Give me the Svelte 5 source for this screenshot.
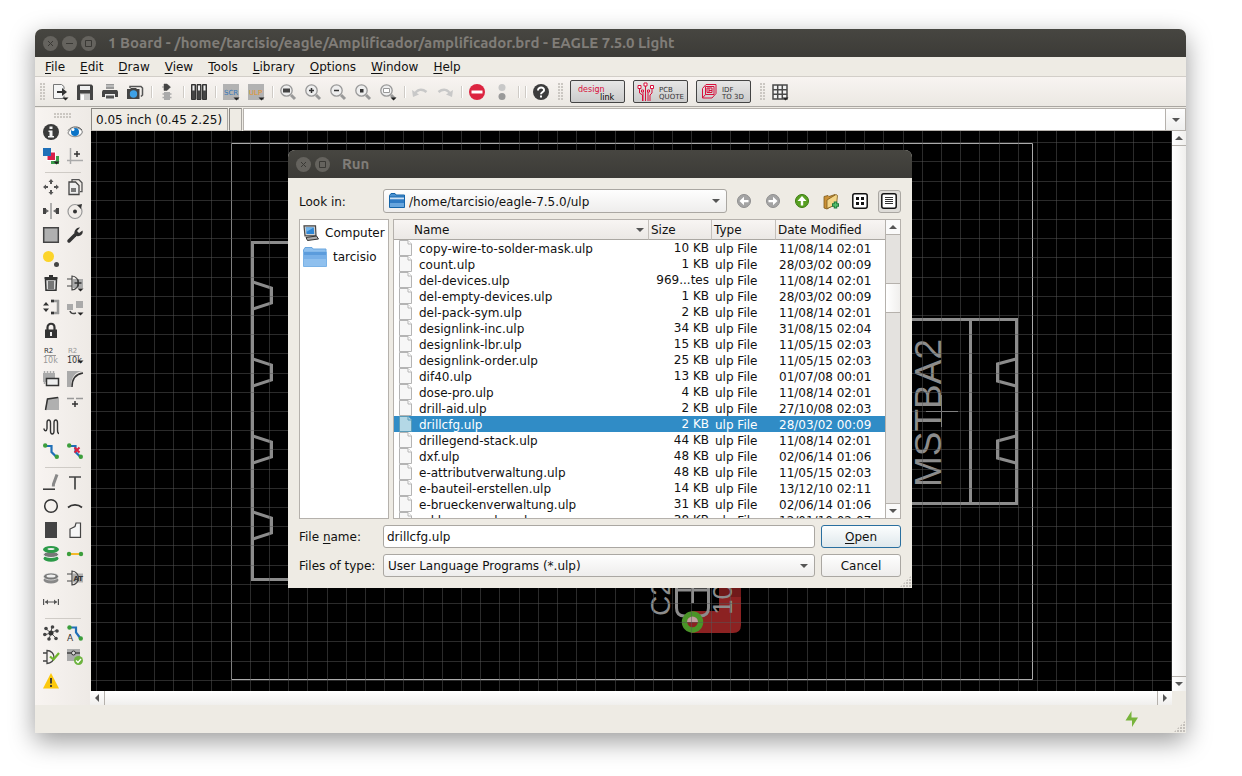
<script>
	const drop = '<path d="M10.5 13.5h6l-3 3z" fill="#222"/>';
	const lens = '<circle cx="6.5" cy="6.5" r="5.7" fill="#eee" stroke="#999" stroke-width="1.3"/><path d="M11 11l4 4" stroke="#999" stroke-width="3"/>';

	const icons = {
		open: '<path d="M12 5V2.500L9.500.500H1.500v14H12v-3" fill="#f5f5f5" stroke="#777" /><path d="M5 7h5V4l5 4-5 4V9H5z" fill="#333"/>' + drop,
		save: '<path d="M0 2l1-1.500h13.500L16 2v14H0z" fill="#444"/><path d="M3 2h10v4H3z" fill="#eee"/><path d="M3 9.500h10V16H3z" fill="#ccc"/><path d="M4 10.500h3V16H4z" fill="#fff"/>',
		print: '<path d="M4 0h8v5H4z" fill="#999"/><path d="M4 2h8" stroke="#ddd"/><path d="M1 6h14l1 1.500V13H0V7.500z" fill="#444"/><path d="M3 10h10v6H3z" fill="#eee"/><path d="M4 11.500h8v3H4z" fill="#555"/>',
		camera: '<path d="M3 4V2.500h11l1.500 1.500v7L14 12.500" fill="none" stroke="#555" stroke-width="1.500"/><path d="M0 5h3l1-1h5l1 1h2.500v10H0z" fill="#444"/><circle cx="6.500" cy="10" r="3.700" fill="#3ea1e6"/>',
		board: '<path d="M5 0h3l3.500 3L8 6.500H5zM3 3h3" fill="#444" stroke="#444" stroke-width=".5"/><path d="M5 8h6v8H5z" fill="#aaa"/><path d="M3.500 10h9M3.500 13.500h9" stroke="#aaa" stroke-width="1.500"/>',
		library: '<path d="M.5.500h4v15h-4zM6 .500h4v15H6zM11.500.500h4v15h-4z" fill="#444" stroke="#333"/><path d="M1.500 1.500h2v5h-2zM7 1.500h2v5H7zM12.500 1.500h2v5h-2z" fill="#eee"/>',
		scr: '<path d="M0 0h16v16H0z" fill="#b2b2b2"/><text x="1" y="10.500" font-family="DejaVu Sans" font-size="7" fill="#3878b8">SCR</text>' + drop,
		ulp: '<path d="M0 0h16v16H0z" fill="#b2b2b2"/><text x="1" y="10.500" font-family="DejaVu Sans" font-size="7" fill="#e39328">ULP</text>' + drop,
		zoomfit: lens + '<path d="M3 4.500h7v4H3z" fill="#444"/>',
		zoomin: lens + '<path d="M6.500 4v5M4 6.500h5" stroke="#333" stroke-width="1.500"/>',
		zoomout: lens + '<path d="M4 6.500h5" stroke="#333" stroke-width="1.500"/>',
		redraw: lens + '<path d="M5 5h3.500v3.500H5z" fill="#333"/>',
		zoomsel: lens + '<path d="M3.500 4.500h6v4h-6z" fill="#fff" stroke="#999"/>' + drop,
		undo: '<path d="M2.500 10.500C5 5 10 4.500 14.500 8" fill="none" stroke="#c8c8c8" stroke-width="2.500"/><path d="M0 6l1 7 6-2.500z" fill="#c8c8c8"/>',
		redo: '<path d="M13.500 10.500C11 5 6 4.500 1.500 8" fill="none" stroke="#c8c8c8" stroke-width="2.500"/><path d="M16 6l-1 7-6-2.500z" fill="#c8c8c8"/>',
		stop: '<circle cx="8" cy="8" r="8" fill="#dc2440"/><path d="M2.500 6.500h11v3h-11z" fill="#fff"/>',
		go: '<circle cx="8" cy="3.500" r="3.500" fill="#c8c8c8"/><circle cx="8" cy="12.500" r="3.500" fill="#999"/>',
		help: '<circle cx="8" cy="8" r="8" fill="#3c3c3c"/><path d="M5 6.500C5 2.500 11.500 2.800 11 6.300c-.2 1.700-3 1.800-3 4M8 11.500v2" fill="none" stroke="#fff" stroke-width="2"/>',
		grid: '<path d="M1 1h14v14H1zM1 5.700h14M1 10.300h14M5.700 1v14M10.300 1v14" fill="#f4f4f4" stroke="#4a4a4a" stroke-width="1.500"/>' + drop,
		info: '<circle cx="8" cy="8" r="8" fill="#3a3a3a"/><path d="M6.500 2.500h3V5h-3zM5.500 6.500h4V12H11v1.500H5V12h1.500V8h-1z" fill="#f4f4f4"/>',
		show: '<path d="M1 9C3 3 13 2 15.500 8 13 14 4 14 1 9z" fill="#fff" stroke="#999" stroke-width="1.200"/><circle cx="8" cy="8" r="4" fill="#0b74c8"/><circle cx="6" cy="5.500" r="1.500" fill="#fff"/><path d="M1 6.500C5 1.500 12 2 15 6" fill="none" stroke="#666"/>',
		layers: '<path d="M8 8h8v8H8z" fill="#3b9d4b"/><path d="M4 4h8.500v8.500H4z" fill="#d8204a" stroke="#fff"/><path d="M0 0h8v8H0z" fill="#2070b8"/>' + drop,
		mark: '<path d="M3.500 0v16M0 12.500h16" stroke="#aaa" stroke-width="1.500"/><path d="M10 3v6M7 6h6" stroke="#333" stroke-width="1.500"/>',
		move: '<path d="M8 0l2.500 3h-1.500v2H7V3H5.500zM8 16l2.500-3H9v-2H7v2H5.500zM0 8l3-2.500V7h2v2H3v1.500zM16 8l-3-2.500V7h-2v2h2v1.500z" fill="#555"/>',
		copy: '<path d="M5 3V.7h7l3 3v9h-2" fill="none" stroke="#555" stroke-width="1.300"/><path d="M2 3h6.500L12 6.500v9H2z" fill="#eee" stroke="#444" stroke-width="1.300"/><path d="M4 9h5v4H4z" fill="#777"/>',
		mirror: '<path d="M8 0v16" stroke="#999" stroke-width="1.500"/><path d="M0 5h3v6H0zM13 5h3v6h-3z" fill="#444"/><path d="M3 6l3 2-3 2zM13 6l-3 2 3 2z" fill="#666"/>',
		rotate: '<circle cx="8" cy="8.500" r="7" fill="none" stroke="#999" stroke-width="1.200"/><circle cx="8" cy="8.500" r="2" fill="#333"/><path d="M10 2l5-1-1 5z" fill="#333"/>',
		group: '<path d="M.7.700h14.600v14.600H.7z" fill="#b0b0b0" stroke="#444" stroke-width="1.500"/>',
		change: '<path d="M2 14l6-6" stroke="#333" stroke-width="3.500" stroke-linecap="round"/><path d="M13 .5L10 4l2 2 3.500-2.500C17 8 11 11 8 8 6 5 9 0 13 .5z" fill="#333"/>',
		paste: '<circle cx="5.500" cy="5.500" r="5.500" fill="#fcd42a"/><circle cx="13.500" cy="13.500" r="2.500" fill="#444"/>',
		trash: '<path d="M2.500 4.500h11L13 15.300H3z" fill="#ddd" stroke="#333" stroke-width="1.500"/><path d="M6 6v8M8 6v8M10 6v8" stroke="#333" stroke-width="1.200"/><path d="M1.500 3h13M6 1h4" stroke="#333" stroke-width="2"/>',
		add: '<path d="M6 4h10v9H6z" fill="#aaa"/><path d="M0 4h5M0 11h5M5 1v14c4 0 6.500-4 6.500-7S9 1 5 1z" fill="none" stroke="#444" stroke-width="1.200"/><path d="M11 4.500v7M7.500 8h7" stroke="#333" stroke-width="1.300"/>' + drop,
		pinswap: '<path d="M16 2H8M16 14H8M15 1v14" stroke="#999" stroke-width="2.500"/><path d="M8 2h3M8 14h3" stroke="#333" stroke-width="2.500"/><path d="M0 6.500h6L3 3zM0 9.500h6L3 13z" fill="#333"/>',
		replace: '<path d="M0 5h6v6H0zM9 2h7v7H9z" fill="#aaa"/><path d="M3 12c1 3 3 3 6 2" fill="none" stroke="#444" stroke-width="1.500"/>' + drop,
		lock: '<path d="M4.500 7V4.500c0-5 7-5 7 0V7" fill="none" stroke="#333" stroke-width="2.200"/><path d="M2 6.500h12V15H2z" fill="#333"/><path d="M8 9v4" stroke="#eee" stroke-width="2"/>',
		name: '<text x="1" y="6" font-family="DejaVu Sans" font-size="7" fill="#333">R2</text><path d="M2 8.500h11" stroke="#999"/><text x="0" y="16" font-family="DejaVu Sans" font-size="8" fill="#999">10k</text>',
		value: '<text x="1" y="6" font-family="DejaVu Sans" font-size="7" fill="#999">R2</text><path d="M2 8.500h11" stroke="#999"/><text x="0" y="16" font-family="DejaVu Sans" font-size="8" fill="#333">10k</text>' + drop,
		smash: '<path d="M0 2h12v9H0z" fill="#aaa"/><path d="M1.500 0v13M4.500 0v13M7.500 0v13M10.500 0v13" stroke="#aaa" stroke-width="1.500"/><path d="M3.500 7.500h12v7h-12z" fill="#eee" stroke="#333" stroke-width="1.500"/>',
		miter: '<path d="M0 0h16C8 1 4 6 4 16H0z" fill="#aaa"/><path d="M16 2C9 3 5 8 5 16" fill="none" stroke="#333" stroke-width="1.500"/>',
		split: '<path d="M4 4l12-2v13H2z" fill="#b0b0b0"/><path d="M2.500 15L4.500 4 15 2.500" fill="none" stroke="#333" stroke-width="1.500"/>',
		optimize: '<path d="M0 3.500h7M9 3.500h7" stroke="#999" stroke-width="1.500"/><path d="M8 6v6M5 9h6" stroke="#333" stroke-width="1.500"/>',
		meander: '<path d="M.7 9.500c1 3 3 3 3.300 0V4c0-4 3.500-4 3.500 0v8c0 4 3.500 4 3.500 0V4c0-4 3.500-4 3.500 0v6.500c0 3 1 4 1.500 4" fill="none" stroke="#333" stroke-width="1.400"/>',
		route: '<path d="M2 3h6.500v6l5 5" fill="none" stroke="#2070b8" stroke-width="2.200"/><circle cx="2.200" cy="2.500" r="2.200" fill="#3c9e3c"/><circle cx="13.800" cy="13.800" r="2.200" fill="#3c9e3c"/>',
		ripup: '<path d="M2 3h6.500v6l5 5" fill="none" stroke="#2070b8" stroke-width="2.200"/><circle cx="2.200" cy="2.500" r="2.200" fill="#3c9e3c"/><circle cx="13.800" cy="13.800" r="2.200" fill="#3c9e3c"/><path d="M7.500 4.500l5 5M12.500 4.500l-5 5" stroke="#dc2040" stroke-width="2"/>',
		wire: '<path d="M0 15.200h12" stroke="#333" stroke-width="1.500"/><path d="M14 .500L10.500 10l-.2 2.500" fill="none" stroke="#888" stroke-width="3"/>',
		text: '<path d="M2 3h12M8 3v12.500" stroke="#444" stroke-width="1.700"/>',
		circle: '<circle cx="8" cy="8" r="6.300" fill="none" stroke="#333" stroke-width="1.500"/>',
		arc: '<path d="M1 9.500C5 6 11 6 15 9.500" fill="none" stroke="#333" stroke-width="1.700"/>',
		rect: '<path d="M2 0h12v16H2z" fill="#444"/>',
		polygon: '<path d="M3 15.300V7l5-2.500L9 1h4.500v14.300z" fill="#f6f6f6" stroke="#444" stroke-width="1.200"/>',
		via: '<ellipse cx="8" cy="12.500" rx="7.500" ry="3.200" fill="#2c9a48"/><ellipse cx="8" cy="8.500" rx="7.500" ry="3" fill="#777" stroke="#eee"/><ellipse cx="8" cy="3.500" rx="8" ry="3.500" fill="#2c9a48"/><ellipse cx="8" cy="3" rx="3.500" ry="1" fill="#eee"/>',
		signal: '<path d="M2 8h12" stroke="#f4b92a" stroke-width="2"/><circle cx="2" cy="8" r="2.200" fill="#3c9e3c"/><circle cx="14" cy="8" r="2.200" fill="#3c9e3c"/>',
		hole: '<ellipse cx="8" cy="10" rx="7.500" ry="3.500" fill="#888"/><ellipse cx="8" cy="6.500" rx="7.500" ry="3.500" fill="#777" stroke="#eee" stroke-width=".7"/><ellipse cx="8" cy="6" rx="4.500" ry="1.500" fill="#eee"/>',
		attribute: '<path d="M6 3.500h10v9H6z" fill="#b0b0b0"/><path d="M0 4h5M0 11h5M5 1v14c4 0 6.500-4 6.500-7S9 1 5 1z" fill="none" stroke="#444" stroke-width="1.200"/><text x="6.500" y="11" font-family="DejaVu Sans" font-weight="bold" font-size="7" fill="#333">AT</text>',
		dimension: '<path d="M.6 5v6M15.400 5v6M2 8h12" stroke="#555" stroke-width="1.200"/><path d="M5 5.500L2 8l3 2.500zM11 5.500L14 8l-3 2.500z" fill="#555"/>',
		ratsnest: '<path d="M8 8L2 3M8 8l1-7M8 8l6-3M8 8l6 6M8 8l-2 6M8 8l-7 2" stroke="#555"/><circle cx="8" cy="8" r="2.500" fill="#333"/><g fill="#444"><circle cx="3" cy="3.500" r="1.800"/><circle cx="9.500" cy="2" r="1.800"/><circle cx="14" cy="6" r="1.800"/><circle cx="13" cy="13.500" r="1.800"/><circle cx="6" cy="14" r="1.800"/><circle cx="1.800" cy="9.500" r="1.800"/></g>',
		auto: '<path d="M3 2.500h6v5l4.500 6" fill="none" stroke="#2070b8" stroke-width="2.200"/><circle cx="2.500" cy="2.500" r="2.200" fill="#3c9e3c"/><circle cx="13.800" cy="13.500" r="2.200" fill="#3c9e3c"/><text x="0" y="16" font-family="DejaVu Sans" font-size="9" fill="#333">A</text>',
		erc: '<path d="M0 4h4M0 12h4M4 1.500v13c4 0 7-3 7-6.500s-3-6.500-7-6.500z" fill="none" stroke="#444" stroke-width="1.300"/><path d="M7 7.500l3.500 3L16 4" fill="none" stroke="#6fb52c" stroke-width="2.200"/>',
		drc: '<path d="M0 0h13v12H0z" fill="#aaa"/><path d="M0 4h13" stroke="#333" stroke-width="1.300"/><circle cx="6.500" cy="4" r="2" fill="#ddd" stroke="#333"/><circle cx="11.500" cy="11.500" r="4.500" fill="#6db33f"/><path d="M9 11.500l2 2 3-3.500" fill="none" stroke="#fff" stroke-width="1.300"/>',
		errors: '<path d="M8 0l8 15.500H0z" fill="#fcc80c"/><path d="M8 5v5.500M8 12v2" stroke="#333" stroke-width="1.800"/>',
		back: '<circle cx="8" cy="8" r="6.500" fill="#a4a4a4" stroke="#8f8f8f"/><path d="M3.500 8l4.500-4.200V7h4.500v2.200H8v3z" fill="#fff"/>',
		forward: '<circle cx="8" cy="8" r="6.500" fill="#a4a4a4" stroke="#8f8f8f"/><path d="M12.500 8L8 3.800V7H3.500v2.200H8v3z" fill="#fff"/>',
		up: '<circle cx="8" cy="8" r="6.500" fill="#58a022" stroke="#3a7c10"/><path d="M8 3l4.500 5H9.200v4.500H6.800V8H3.500z" fill="#fff"/>',
		newfolder: '<path d="M1 3.500l4-1 1 1 6-2v9.500l-8 5-3-1z" fill="#c98f35" stroke="#7c5a1c" stroke-width=".8"/><path d="M4 7l9-5.500 1.500 1-1 9-9.500 4z" fill="#f3d587" stroke="#7c5a1c" stroke-width=".8"/><path d="M12.500 8.500v7M9 12h7" stroke="#1e7a3c" stroke-width="3.500"/><path d="M12.500 9.500v5M10 12h5" stroke="#56c06c" stroke-width="1.500"/>',
		list: '<rect x=".8" y=".8" width="14.400" height="14.400" rx="2" fill="#fff" stroke="#111" stroke-width="1.500"/><path d="M4 4h3v3H4zM9 4h3v3H9zM4 9h3v3H4zM9 9h3v3H9z" fill="#111"/>',
		detail: '<rect x=".8" y=".8" width="14.400" height="14.400" rx="2" fill="#fff" stroke="#111" stroke-width="1.500"/><path d="M4 4.500h8M4 6.500h8M4 8.500h8M4 10.500h8" stroke="#333"/>',
		folder: '<path d="M.5 2.500L2 .500h4l1 1.500h8.500v3H.5z" fill="#4a90d0" stroke="#1464a8"/><path d="M.5 4h15v10.500H.5z" fill="#3c86cc" stroke="#1464a8"/><path d="M1 4.500h14v2H1z" fill="#cfe2f4"/><path d="M1 6.500h14V10H1z" fill="#2f7bc4"/><path d="M1 10h14v4H1z" fill="#68a6de"/>',
		computer: '<path d="M1 .800h11.500l.5 10H2z" fill="#d0d0d0" stroke="#444" stroke-width="1.200"/><path d="M2.800 2.500h8l.4 6.500H3.500z" fill="#2f86d4"/><path d="M2.800 2.500h8L3.300 7z" fill="#73b6ec"/><path d="M3 12.500l10.500-1.500 2 3-11 1.500z" fill="#aaa" stroke="#333"/>'
	};

	const menus = ['File', 'Edit', 'Draw', 'View', 'Tools', 'Library', 'Options', 'Window', 'Help'];

	const tools = [
		'open', 'save', 'print', 'camera', '|', 'board', '|', 'library', '|', 'scr', 'ulp', '|',
		'zoomfit', 'zoomin', 'zoomout', 'redraw', 'zoomsel', '|', 'undo', 'redo', '|', 'stop', 'go', '|', '|', 'help'
	];

	const palette = [
		'info', 'show', 'layers', 'mark', '|',
		'move', 'copy', 'mirror', 'rotate', 'group', 'change', 'paste', '', 'trash', 'add',
		'pinswap', 'replace', 'lock', '', 'name', 'value', 'smash', 'miter', 'split', 'optimize',
		'meander', '', 'route', 'ripup', '|',
		'wire', 'text', 'circle', 'arc', 'rect', 'polygon', 'via', 'signal', 'hole', 'attribute', 'dimension', '', '|',
		'ratsnest', 'auto', 'erc', 'drc', 'errors', ''
	];

	const files = [
		['copy-wire-to-solder-mask.ulp', '10 KB', '11/08/14 02:01'],
		['count.ulp', '1 KB', '28/03/02 00:09'],
		['del-devices.ulp', '969...tes', '11/08/14 02:01'],
		['del-empty-devices.ulp', '1 KB', '28/03/02 00:09'],
		['del-pack-sym.ulp', '2 KB', '11/08/14 02:01'],
		['designlink-inc.ulp', '34 KB', '31/08/15 02:04'],
		['designlink-lbr.ulp', '15 KB', '11/05/15 02:03'],
		['designlink-order.ulp', '25 KB', '11/05/15 02:03'],
		['dif40.ulp', '13 KB', '01/07/08 00:01'],
		['dose-pro.ulp', '4 KB', '11/08/14 02:01'],
		['drill-aid.ulp', '2 KB', '27/10/08 02:03'],
		['drillcfg.ulp', '2 KB', '28/03/02 00:09'],
		['drillegend-stack.ulp', '44 KB', '11/08/14 02:01'],
		['dxf.ulp', '48 KB', '02/06/14 01:06'],
		['e-attributverwaltung.ulp', '48 KB', '11/05/15 02:03'],
		['e-bauteil-erstellen.ulp', '14 KB', '13/12/10 02:11'],
		['e-brueckenverwaltung.ulp', '31 KB', '02/06/14 01:06'],
		['e-klemmenplan.ulp', '38 KB', '12/01/10 02:07']
	];

	let selected = $state('drillcfg.ulp');
	let command = $state('');

	// board grid, 19.2px pitch snapped to whole pixels
	const gridX = Array.from({ length: 130 }, (_, i) => Math.round(5.2 + i * 19.2));
	const gridY = Array.from({ length: 70 }, (_, i) => Math.round(11.2 + i * 19.2));
</script>

{#snippet icon(name)}
	<svg class="icon" viewBox="0 0 16 16" aria-hidden="true">{@html icons[name]}</svg>
{/snippet}

{#snippet arrow(dir)}
	<svg class="arrow {dir}" viewBox="0 0 8 8" aria-hidden="true"><path d="M0 2h8L4 6z" fill="#555" /></svg>
{/snippet}

{#snippet winButton(kind)}
	<button class="win-btn" aria-label={kind}>
		<svg viewBox="0 0 15 15">
			{#if kind === 'close'}
				<path d="M5 5l5 5M10 5l-5 5" />
			{:else if kind === 'minimize'}
				<path d="M4 7.500h7" />
			{:else}
				<path d="M4.500 4.500h6v6h-6z" />
			{/if}
		</svg>
	</button>
{/snippet}

<main>
	<div class="window">
		<header class="titlebar">
			{@render winButton('close')}
			{@render winButton('minimize')}
			{@render winButton('maximize')}
			<h1>1 Board - /home/tarcisio/eagle/Amplificador/amplificador.brd - EAGLE 7.5.0 Light</h1>
		</header>

		<nav class="menubar">
			{#each menus as m}
				<button><u>{m[0]}</u>{m.slice(1)}</button>
			{/each}
		</nav>

		<div class="toolbar">
			<span class="grip"></span>
			{#each tools as t}
				{#if t === '|'}
					<span class="sep"></span>
				{:else}
					<button class="tool" aria-label={t}>{@render icon(t)}</button>
				{/if}
			{/each}
			<span class="grip mid"></span>
			<div class="banners">
				<button class="banner design"><span>design</span><b>link</b></button>
				<button class="banner">
					<svg viewBox="0 0 18 19">
						<path d="M2.500 6v5l3 2v6M6 10.500V19M8.500 4v15M11 10V19M15 6v5l-2 2v6" />
						<path d="M1 3.500h3v3H1zM7 1h3v3H7zM13.500 3.500h3v3h-3zM4.500 8h2v2h-2zM10.500 8h2v2h-2z" fill="#fff" />
					</svg>
					<span>PCB<br />QUOTE</span>
				</button>
				<button class="banner">
					<svg viewBox="0 0 18 19">
						<path d="M2.500 6.500L6 2.500h10v9l-4 4.500H2.500zM5.500 4.500h8.500v8M2.500 16l3-3.500v-8M5.500 12.500h8.500" />
						<path d="M7 6h5v4.500H7zM9 6v4.500M9 8.500h3" />
					</svg>
					<span>IDF<br />TO 3D</span>
				</button>
			</div>
			<span class="grip"></span>
			<button class="tool" aria-label="grid">{@render icon('grid')}</button>
		</div>

		<div class="work">
			<aside class="palette">
				<span class="grip wide"></span>
				<div class="palette-grid">
					{#each palette as p}
						{#if p === '|'}
							<span class="rule"></span>
						{:else if p === ''}
							<span></span>
						{:else}
							<button aria-label={p}>{@render icon(p)}</button>
						{/if}
					{/each}
				</div>
			</aside>

			<section class="editor">
				<div class="command">
					<span class="coords">0.05 inch (0.45 2.25)</span>
					<span class="status-cell"></span>
					<input type="text" aria-label="Command" bind:value={command} />
					<button aria-label="Command history">{@render arrow('down')}</button>
				</div>

				<div class="canvas-row">
					<svg class="canvas" role="img" aria-label="Board">
						<g transform="translate(-91 -131)" fill="none" stroke="#8c8c8c" stroke-width="3">
							<path d="M719 580h22v45q0 8-8 8h-42v-22h28z" fill="#8c2222" stroke="none" />
							<path d="M719 580h22v17h-22z" fill="#701a1a" stroke="none" />
							<path d="M676.500 580v28q0 8 8 8h15q9 0 9-8v-28M678 590h30M692.500 588v15" />
							<path d="M231.500 143.500h801v536h-801z" stroke="#aaa" stroke-width="1" />
							<path d="M300 242.500H252.500v337H300" />
							{#each [0, 77, 154, 230] as dy}
								<path d="M253 {282 + dy}l18.500 6v15l-18.500 6" />
							{/each}
							<path d="M900 319.500h116.500v184H900M970.500 319v184" />
							{#each [0, 77] as dy}
								<path d="M1016 {359 + dy}l-18.500 5v17l18.500 5" />
							{/each}
							<g class="silk">
								<text class="big" transform="translate(941 487) rotate(-90)">MSTBA2</text>
								<text transform="translate(670 616) rotate(-90)">C2</text>
								<text transform="translate(732 615) rotate(-90)">10</text>
							</g>
							<circle cx="692.500" cy="622" r="8" stroke="#4a9428" stroke-width="5.500" fill="#8c2222" />
							<path d="M687 622a5.500 5.500 0 0 1 11 0z" fill="#c0a0a0" stroke="none" />
							<path d="M926 411.500h32M941.500 395v32" stroke="#aaa" stroke-width="1" />
						</g>
						<g class="grid-lines">
							{#each gridX as x}<rect {x} y="0" width="1" height="100%" />{/each}
							{#each gridY as y}<rect x="0" {y} width="100%" height="1" />{/each}
						</g>
					</svg>
					<div class="vscroll">
						<button aria-label="Scroll up">{@render arrow('up')}</button>
						<span></span>
						<button aria-label="Scroll down">{@render arrow('down')}</button>
					</div>
				</div>

				<div class="hscroll">
					<button aria-label="Scroll left">{@render arrow('left')}</button>
					<span></span>
					<button aria-label="Scroll right">{@render arrow('right')}</button>
				</div>
			</section>
		</div>

		<footer class="statusbar">
			<svg viewBox="0 0 14 16" aria-hidden="true"><path d="M6.500 0v6.500H13L7 16V9.500H.5z" fill="#78b43c" /></svg>
			<span class="size-grip"></span>
		</footer>

		<div class="dialog" role="dialog" aria-label="Run">
			<header class="titlebar">
				{@render winButton('close')}
				{@render winButton('maximize')}
				<h2>Run</h2>
			</header>

			<form class="dialog-body" onsubmit={(e) => e.preventDefault()}>
				<div class="look-row">
					<label for="look">Look in:</label>
					<div class="combo">
						{@render icon('folder')}
						<select id="look"><option>/home/tarcisio/eagle-7.5.0/ulp</option></select>
						{@render arrow('down')}
					</div>
					<div class="nav-btns">
						{#each ['back', 'forward', 'up', 'newfolder', 'list', 'detail'] as n}
							<button type="button" class:pressed={n === 'detail'} aria-label={n}>{@render icon(n)}</button>
						{/each}
					</div>
				</div>

				<div class="panes">
					<ul class="places">
						<li>{@render icon('computer')}Computer</li>
						<li>
							<svg class="big-folder" viewBox="0 0 24 20" aria-hidden="true">
								<path d="M.5 3L2 .500h7L10 2h13v5H.5z" fill="#8fc0ee" stroke="#6aa6de" />
								<path d="M.5 5h23v14.500H.5z" fill="#8fc0ee" stroke="#7ab2e6" />
								<path d="M1 5h22v3H1z" fill="#5c9cdc" />
								<path d="M1 8h22v4H1z" fill="#78b0e8" />
							</svg>
							tarcisio
						</li>
					</ul>

					<div class="files">
						<div class="file-list">
							<table>
								<thead>
									<tr>
										<th class="c-name"><div>Name {@render arrow('down')}</div></th>
										<th class="c-size">Size</th>
										<th class="c-type">Type</th>
										<th>Date Modified</th>
									</tr>
								</thead>
								<tbody>
									{#each files as [name, size, date]}
										<tr class:selected={name === selected} onclick={() => (selected = name)}>
											<td class="name">
												<div class="file-name">
													<svg viewBox="0 0 14 16" aria-hidden="true">
														<path class="page" d="M.5.500H9L12.500 4v11.500H.5z" />
														<path class="fold" d="M9 .500V4h3.500" />
													</svg>
													<span>{name}</span>
												</div>
											</td>
											<td class="size">{size}</td>
											<td>ulp File</td>
											<td>{date}</td>
										</tr>
									{/each}
								</tbody>
							</table>
						</div>
						<div class="list-scroll">
							<button type="button" aria-label="Scroll up">{@render arrow('up')}</button>
							<span class="track"><span class="thumb"></span></span>
							<button type="button" aria-label="Scroll down">{@render arrow('down')}</button>
						</div>
					</div>
				</div>

				<div class="form-row">
					<label for="fname">File <u>n</u>ame:</label>
					<input id="fname" type="text" bind:value={selected} />
					<button class="push default"><u>O</u>pen</button>
				</div>
				<div class="form-row">
					<label for="ftype">Files of type:</label>
					<div class="combo">
						<select id="ftype"><option>User Language Programs (*.ulp)</option></select>
						{@render arrow('down')}
					</div>
					<button type="button" class="push">Cancel</button>
				</div>
			</form>
			<span class="size-grip"></span>
		</div>
	</div>
</main>

<style>
	:global(body) {
		margin: 0;
		background: #fff;
	}

	main {
		box-sizing: border-box;
		min-height: 100vh;
		display: flex;
		padding: 29px 56px 43px 35px;
		font: 12px/16px "DejaVu Sans", sans-serif;
		color: #111;
	}

	button, input, select {
		box-sizing: border-box;
		margin: 0;
		padding: 0;
		border: none;
		outline: none;
		background: none;
		font: inherit;
		color: inherit;
	}

	select {
		appearance: none;
	}

	u {
		text-underline-offset: 2px;
	}

	svg {
		display: block;
		flex: none;
	}

	.icon {
		width: 16px;
		height: 16px;
		overflow: visible;
	}

	.arrow {
		width: 8px;
		height: 8px;
	}
	.arrow.up { transform: rotate(180deg); }
	.arrow.left { transform: rotate(90deg); }
	.arrow.right { transform: rotate(-90deg); }

	.window {
		position: relative;
		flex: 1;
		display: flex;
		flex-direction: column;
		background: #eeebe4;
		border-radius: 7px 7px 0 0;
		box-shadow: 0 8px 26px rgba(0, 0, 0, 0.4);
	}

	.titlebar {
		display: flex;
		align-items: center;
		gap: 4px;
		height: 28px;
		padding-left: 8px;
		border-radius: 7px 7px 0 0;
		background: linear-gradient(#474641, #3c3b37);
	}
	.titlebar h1,
	.titlebar h2 {
		margin: 0 0 0 8px;
		font: bold 15px/20px Ubuntu, "Noto Sans", sans-serif;
		color: #807d78;
		white-space: nowrap;
	}

	.win-btn svg {
		width: 15px;
		height: 15px;
		border-radius: 50%;
		background: #65635e;
		fill: none;
		stroke: #3a3935;
	}

	.menubar {
		display: flex;
		gap: 1px;
		height: 19px;
		padding-left: 3px;
		border-bottom: 1px solid #d2cec8;
	}
	.menubar button {
		padding: 0 7px;
	}

	.toolbar {
		display: flex;
		align-items: center;
		height: 29px;
		padding-left: 5px;
		background: linear-gradient(#f8f4f1, #ebe8e3);
		border-bottom: 1px solid #aaa7a2;
	}
	.tool {
		width: 25px;
		height: 25px;
		padding: 4px;
	}
	.sep {
		width: 1px;
		height: 12px;
		margin: 0 3px;
		background: #cfcbc6;
		box-shadow: 1px 0 #fff;
	}
	.grip {
		width: 5px;
		height: 17px;
		margin-right: 3px;
		background: radial-gradient(circle at 1px 1px, #cbc7c2 0 1px, transparent 1px) 0 0 / 3px 3px;
	}
	.grip.mid {
		margin: 0 7px 0 4px;
	}
	.grip.wide {
		display: block;
		width: 17px;
		height: 5px;
		margin: 0 auto 2px;
	}
	.banners {
		display: flex;
		gap: 8px;
		margin-right: 9px;
	}
	.banner {
		display: flex;
		align-items: center;
		gap: 4px;
		width: 55px;
		height: 23px;
		padding-left: 3px;
		border: 1px solid #444;
		border-radius: 2px;
		background: linear-gradient(#e6e6e6, #cbcbcb);
		font-size: 7px;
		line-height: 7px;
		text-align: left;
		color: #333;
	}
	.banner svg {
		width: 18px;
		height: 19px;
		fill: none;
		stroke: #d8103c;
	}
	.banner span {
		padding-top: 4px;
	}
	.banner.design {
		flex-direction: column;
		align-items: flex-start;
		justify-content: center;
		gap: 0;
		padding-left: 7px;
		font-size: 8px;
		line-height: 8px;
	}
	.design span {
		color: #d8103c;
	}
	.design b {
		margin-left: 22px;
		font-weight: normal;
		color: #000;
	}

	.work {
		flex: 1;
		display: flex;
		margin-top: 1px;
	}

	.palette {
		width: 55px;
		box-sizing: border-box;
		padding-top: 5px;
		background: linear-gradient(90deg, #f8f4f1, #eeeae6);
	}
	.palette-grid {
		display: grid;
		grid-template-columns: 24px 24px;
		grid-auto-rows: auto;
		padding-left: 4px;
	}
	.palette-grid button {
		width: 24px;
		height: 24px;
		padding: 4px;
	}
	.rule {
		grid-column: span 2;
		height: 1px;
		margin: 4px 6px 2px;
		background: #cfcbc6;
	}

	.editor {
		flex: 1;
		display: flex;
		flex-direction: column;
		min-width: 0;
	}

	.command {
		display: flex;
		height: 23px;
		padding-left: 1px;
	}
	.coords,
	.status-cell {
		box-sizing: border-box;
		border: 1px solid;
		border-color: #8a8782 #a8a5a0 #c8c4be #8a8782;
	}
	.coords {
		width: 137px;
		padding: 3px 0 0 4px;
		margin-right: 1px;
		white-space: nowrap;
	}
	.status-cell {
		width: 13px;
		margin-right: 1px;
	}
	.command input {
		flex: 1;
		min-width: 0;
		padding: 0 4px;
		border: 1px solid #b5b1ac;
		background: #fff;
	}
	.command button {
		width: 20px;
		display: grid;
		place-items: center;
		border: 1px solid #b5b1ac;
		border-left: none;
		background: linear-gradient(#fdfdfd, #efefee);
	}

	.canvas-row {
		flex: 1;
		display: flex;
		min-height: 560px;
		padding-left: 1px;
	}
	.canvas {
		flex: 1;
		min-width: 0;
		height: auto;
		background: #000;
		overflow: hidden;
	}
	.grid-lines {
		fill: #555;
		fill-opacity: 0.5;
	}
	.silk {
		fill: #8c8c8c;
		stroke: none;
		font: 28px "Liberation Sans", sans-serif;
	}
	.silk .big {
		font-size: 37px;
	}

	.vscroll,
	.hscroll {
		display: flex;
		background: linear-gradient(90deg, #fff, #f0efed);
	}
	.vscroll {
		flex-direction: column;
		width: 14px;
	}
	.hscroll {
		height: 14px;
		margin-right: 14px;
		background: linear-gradient(#fff, #f0efed);
	}
	.vscroll span,
	.hscroll span {
		flex: 1;
		border: 0 solid #b5b1ac;
	}
	.vscroll span { border-width: 1px 0; }
	.hscroll span { border-width: 0 1px; }
	.vscroll button,
	.hscroll button,
	.list-scroll button {
		width: 14px;
		height: 14px;
		display: grid;
		place-items: center;
	}

	.statusbar {
		display: flex;
		align-items: center;
		justify-content: flex-end;
		height: 28px;
		padding-right: 47px;
	}
	.statusbar svg {
		width: 14px;
		height: 16px;
	}
	.size-grip {
		position: absolute;
		right: 1px;
		bottom: 1px;
		width: 11px;
		height: 11px;
		background: radial-gradient(circle at 1px 1px, #c4c0bb 0 1px, transparent 1px) 0 0 / 3px 3px;
		clip-path: polygon(100% 0, 100% 100%, 0 100%);
	}

	.dialog {
		position: absolute;
		left: 253px;
		top: 121px;
		width: 624px;
		background: #eeebe4;
		border-radius: 7px 7px 0 0;
	}
	.dialog-body {
		padding: 11px;
	}
	.look-row,
	.form-row {
		display: flex;
		align-items: center;
	}
	.look-row {
		height: 24px;
		margin-bottom: 6px;
	}
	.look-row label,
	.look-row select {
		padding-top: 2px;
	}
	.form-row {
		height: 23px;
		margin-top: 6px;
	}
	label {
		width: 84px;
		white-space: nowrap;
	}
	.combo,
	.form-row input {
		box-sizing: border-box;
		flex: 1;
		min-width: 0;
		height: 100%;
		border: 1px solid #aaa7a2;
		border-radius: 3px;
	}
	.combo {
		display: flex;
		align-items: center;
		padding: 0 6px 0 4px;
		background: linear-gradient(#fefefe, #eeedec);
	}
	.combo select {
		flex: 1;
		min-width: 0;
	}
	.look-row .combo {
		gap: 4px;
		padding-left: 5px;
	}
	.form-row input {
		padding: 0 3px;
		background: #fff;
	}
	.nav-btns {
		display: flex;
		gap: 6px;
		margin-left: 6px;
	}
	.nav-btns button {
		width: 23px;
		height: 23px;
		padding: 3px;
	}
	.nav-btns .pressed {
		padding: 2px;
		border: 1px solid #aaa7a2;
		border-radius: 3px;
		background: #dedcd8;
	}

	.panes {
		display: flex;
		gap: 4px;
		height: 300px;
	}
	.places,
	.files {
		box-sizing: border-box;
		border: 1px solid #b5b1ac;
		background: #fff;
	}
	.places {
		width: 90px;
		margin: 0;
		padding: 1px 3px 0;
		list-style: none;
		overflow: hidden;
	}
	.places li {
		display: flex;
		align-items: center;
		gap: 6px;
		height: 24px;
		white-space: nowrap;
	}
	.big-folder {
		width: 24px;
		height: 20px;
	}
	.files {
		flex: 1;
		display: flex;
		min-width: 0;
	}
	.file-list {
		flex: 1;
		overflow: hidden;
	}
	table {
		width: 100%;
		table-layout: fixed;
		border-collapse: separate;
		border-spacing: 0;
	}
	th,
	td {
		padding: 0;
		text-align: left;
		font-weight: normal;
		white-space: nowrap;
	}
	th {
		box-sizing: border-box;
		height: 20px;
		padding-left: 2px;
		border-right: 1px solid #c4c0bb;
		border-bottom: 1px solid #aaa7a2;
		background: linear-gradient(#f8f5f3, #ebe8e5);
	}
	th:last-child {
		border-right: none;
	}
	.c-name {
		width: 255px;
		padding: 0 4px 0 20px;
	}
	.c-name div {
		display: flex;
		align-items: center;
		justify-content: space-between;
	}
	.c-size { width: 63px; }
	.c-type { width: 64px; }
	td {
		box-sizing: border-box;
		height: 16px;
		padding: 2px 0 0 3px;
		line-height: 14px;
		vertical-align: top;
	}
	td.name {
		padding-top: 0;
	}
	td.size {
		padding: 0 3px 0 0;
		line-height: 16px;
		text-align: right;
	}
	.file-name {
		display: flex;
		gap: 6px;
		height: 16px;
		padding-left: 2px;
	}
	.file-name span {
		padding-top: 2px;
	}
	.file-name svg {
		width: 14px;
		height: 16px;
	}
	.page { fill: #f7f7f7; stroke: #b4b4b4; }
	.fold { fill: #fff; stroke: #b4b4b4; }
	.selected {
		background: #308cc6;
		color: #fff;
	}
	.selected .page,
	.selected .fold {
		fill: #b4d8e6;
		stroke: #5a9cb8;
	}

	.list-scroll {
		display: flex;
		flex-direction: column;
		width: 14px;
		border-left: 1px solid #b5b1ac;
		background: #fafafa;
	}
	.track {
		flex: 1;
		padding-top: 48px;
		border: 1px solid #b5b1ac;
		border-width: 1px 0;
		background: #e4e2df;
	}
	.thumb {
		display: block;
		height: 28px;
		border: 1px solid #b5b1ac;
		border-width: 1px 0;
		background: linear-gradient(90deg, #fff, #f0efed);
	}

	.push {
		width: 80px;
		height: 100%;
		margin-left: 6px;
		border: 1px solid #aaa7a2;
		border-radius: 3px;
		background: linear-gradient(#fefefe, #eeedec);
	}
	.push.default {
		border-color: #2a6f9f;
		background: linear-gradient(#fcfefe, #dfe8ec);
	}
</style>
